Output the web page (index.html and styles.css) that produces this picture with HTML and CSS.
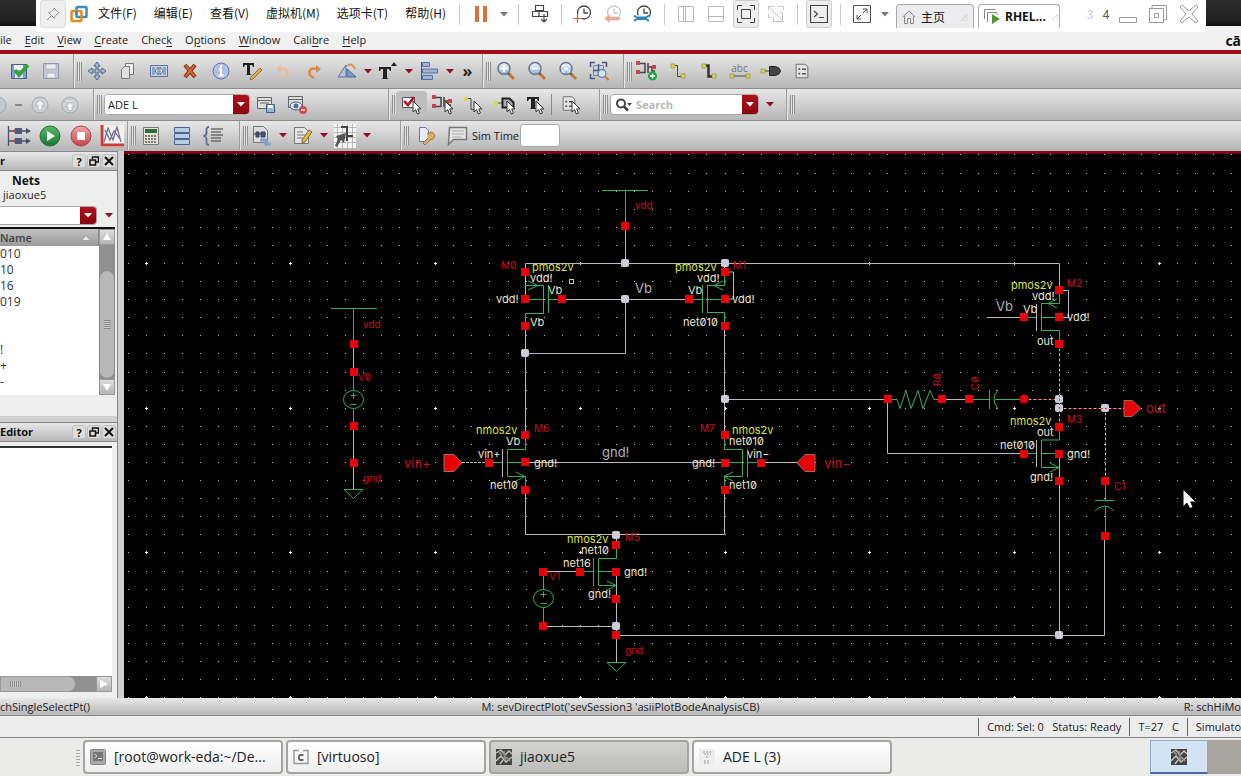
FILE: index.html
```html
<!DOCTYPE html>
<html lang="zh">
<head>
<meta charset="utf-8">
<title>Schematic Editor - jiaoxue5</title>
<link rel="stylesheet" href="styles.css">
</head>
<body>
<svg class="defs" width="0" height="0" aria-hidden="true">
  <defs>
    <linearGradient id="gGlass" x1="0" y1="0" x2="0" y2="1"><stop offset="0" stop-color="#f4f8fc"/><stop offset="1" stop-color="#8fb0d4"/></linearGradient>
    <linearGradient id="gGreen" x1="0" y1="0" x2="0" y2="1"><stop offset="0" stop-color="#58b868"/><stop offset="1" stop-color="#137a30"/></linearGradient>
    <linearGradient id="gRed" x1="0" y1="0" x2="0" y2="1"><stop offset="0" stop-color="#f0a8ac"/><stop offset="1" stop-color="#cc3d48"/></linearGradient>
    <symbol id="cur" viewBox="0 0 10 15"><path d="M1 1v11l2.600-2.400L5.400 14l2-1L5.700 8.900H9z" fill="#fff" stroke="#333" stroke-width="1"/></symbol>
    <symbol id="tri" viewBox="0 0 8 5"><path d="M0 0h8L4 4.500z"/></symbol>
    <symbol id="lens" viewBox="0 0 20 20"><path d="M12 12l6 6" stroke="#c07838" stroke-width="3"/><path d="M11.500 11.500l2 2" stroke="#555" stroke-width="2"/><circle cx="8" cy="7.500" r="6" fill="url(#gGlass)" stroke="#66788e" stroke-width="1.500"/></symbol>
    <symbol id="mos" viewBox="0 0 20 14"><path d="M4 2.500h5v9H4M12 2v10M12 6h7M16 6v4h3" fill="none" stroke="#444" stroke-width="1.500"/><path d="M0 0h4v4H0zM0 9h4v4H0zM16 4h4v4h-4z" fill="#c84450"/></symbol>
    <symbol id="page" viewBox="0 0 20 20"><path d="M3.500 2.500h10l3 3v12h-13z" fill="#e4e4e4" stroke="#666"/><path d="M6 7h2v2H6zM6 12h2v2H6z" fill="#555"/><path d="M10 8h4.500M10 13h4.500" stroke="#555" stroke-width="1.500"/></symbol>
    <symbol id="photo" viewBox="0 0 16 16"><rect width="16" height="16" fill="#44443f"/><path d="M0 4l5-3 4 5 4-4 3 3M0 12l5-5 5 6 6-5M4 15l3-4" fill="none" stroke="#c8c8c4" stroke-width="1.300"/><path d="M3 3l3 3M10 8l4 4M8 2l1 9" stroke="#8c8c88" stroke-width="2"/></symbol>
    <symbol id="clock" viewBox="0 0 20 20"><circle cx="11" cy="8.500" r="6.500" fill="none" stroke="currentColor" stroke-width="1.300"/><path d="M11 4.500v4.500h4" fill="none" stroke="currentColor" stroke-width="1.300"/></symbol>
  </defs>
</svg>

<header class="vmbar">
  <div class="cap"></div>
  <div class="vm">
    <button class="pinbtn" aria-label="Pin"><svg width="14" height="14" viewBox="0 0 14 14"><path d="M8 1l5 5-1.500.6L9 9.500l-.5 2L2.500 5.500l2-.5L7.500 2.500zM5 9l-4 4" fill="none" stroke="#999"/></svg></button>
    <svg class="logo" width="18" height="18" viewBox="0 0 18 18"><rect x="6.500" y="2" width="10" height="10" rx="1" fill="none" stroke="#3b8fb5" stroke-width="2.500"/><rect x="1.500" y="6" width="10" height="10" rx="1" fill="none" stroke="#e08a28" stroke-width="2.500"/><path d="M6.500 6v4" stroke="#3b8fb5" stroke-width="2.500"/></svg>
    <nav class="vmmenu"><button>文件(F)</button><button>编辑(E)</button><button>查看(V)</button><button>虚拟机(M)</button><button>选项卡(T)</button><button>帮助(H)</button></nav>
    <i class="sep"></i>
    <button class="vb" aria-label="Pause"><svg width="14" height="18"><path d="M1 1h4v16H1zM9 1h4v16H9z" fill="#d8723a"/></svg></button>
    <button class="vc" aria-label="Power menu"><svg width="8" height="5" fill="#777"><use href="#tri"/></svg></button>
    <i class="sep"></i>
    <button class="vb" aria-label="Send keys"><svg width="18" height="18" viewBox="0 0 18 18"><path d="M4.500.5h8v5h-8zM1.500 6.500h15v5h-15zM8 6.500v5M13 9v8M10 14l3 3 3-3" fill="none" stroke="#444" stroke-width="1.200"/></svg></button>
    <i class="sep"></i>
    <button class="vb" aria-label="Take snapshot"><svg width="20" height="20" color="#444"><use href="#clock"/><path d="M1 14h8M5 10v8" stroke="#fff" stroke-width="4"/><path d="M0 14.500h9M4.500 10v9" stroke="#d86040" stroke-width="1.200"/></svg></button>
    <button class="vb" aria-label="Revert snapshot"><svg width="20" height="20" color="#c8c8c8"><use href="#clock"/><path d="M1 14.500l6-5v3h10v4H7v3z" fill="#f0a898" stroke="#fff" stroke-width=".5"/></svg></button>
    <button class="vb" aria-label="Manage snapshots"><svg width="20" height="20" color="#444"><use href="#clock"/><path d="M3 14.500h13" stroke="#fff" stroke-width="6"/><path d="M1 11.500l3 2h9l3-2M1 17l3-2h9l3 2" fill="none" stroke="#2c86bc" stroke-width="2"/></svg></button>
    <i class="sep"></i>
    <button class="vb" aria-label="Library"><svg width="18" height="18"><path d="M1.500 1.500h15v15h-15zM6.500 1.500v15M8.500 1.500v15" fill="none" stroke="#b8b8b8"/></svg></button>
    <button class="vb" aria-label="Thumbnails"><svg width="18" height="18"><path d="M1.500 1.500h15v15h-15zM1.500 11.500h15" fill="none" stroke="#b8b8b8"/></svg></button>
    <button class="vb on" aria-label="Full screen"><svg width="18" height="18"><path d="M.500 5V.500H5M13 .500h4.500V5M17.500 13v4.500H13M5 17.500H.500V13M4.500 4.500h9v9h-9z" fill="none" stroke="#444"/></svg></button>
    <button class="vb" aria-label="Unity"><svg width="18" height="18"><path d="M1.500 5V1.500H7M1.500 9v3.500H4M6.500 12v4.500h9v-9H13M16.500 5V1.500h-5M1 1l16 16" fill="none" stroke="#c4c4c4"/></svg></button>
    <i class="sep"></i>
    <button class="vb on" aria-label="Console"><svg width="18" height="18"><path d="M.500.500h17v17H.500zM4 6l3.500 3L4 12M9 12.500h5" fill="none" stroke="#444" stroke-width="1.200"/></svg></button>
    <i class="sep"></i>
    <button class="vb" aria-label="Stretch"><svg width="18" height="18"><path d="M.500.500h17v17H.500zM10 4h4v4M14 4l-4 4M4 10v4h4M4 14l4-4" fill="none" stroke="#555"/></svg></button>
    <button class="vc" aria-label="Stretch menu"><svg width="8" height="5" fill="#777"><use href="#tri"/></svg></button>
    <div class="tabs">
      <a class="tab home" href="#home"><svg width="14" height="14"><path d="M.700 7L7 1l6.300 6M2.500 6v7.500h3V8.500h3v5h3V6" fill="none" stroke="#888"/></svg>主页<span class="close">⊿</span></a>
      <a class="tab live" href="#rhel"><svg width="16" height="16"><path d="M.500 10V.500H11M3.500 13V3.500H13V6" fill="none" stroke="#888"/><path d="M8 5l8 5-8 5z" fill="#4a9a30"/></svg><b>RHEL...</b><span class="close">⊿</span></a>
    </div>
    <span class="num dim">3</span><span class="num">4</span>
    <div class="win">
      <button aria-label="Minimize"><svg width="18" height="18"><path d="M.500 12.500h17v5H.500z" fill="none" stroke="#999"/></svg></button>
      <button aria-label="Restore"><svg width="18" height="18"><path d="M.500 3.500h14v14H.500zM3 3V.500h14.500V15H15M5.500 8.500h4v4h-4z" fill="none" stroke="#999"/></svg></button>
      <button aria-label="Close"><svg width="20" height="20"><path d="M1 3l2-2 7 6 7-6 2 2-6 7 6 7-2 2-7-6-7 6-2-2 6-7z" fill="none" stroke="#999"/></svg></button>
    </div>
  </div>
  <div class="cap end"></div>
</header>

<nav class="menubar">
  <button>ile</button><button><u>E</u>dit</button><button><u>V</u>iew</button><button><u>C</u>reate</button><button>Chec<u>k</u></button><button>O<u>p</u>tions</button><button><u>W</u>indow</button><button>Cali<u>b</u>re</button><button><u>H</u>elp</button>
  <span class="brand">cā</span>
</nav>

<div class="bar">
  <div class="grp first">
    <button class="tb" aria-label="Check and Save"><svg width="20" height="20"><path d="M1.500 3.500h15v14h-15z" fill="#7f9dc8" stroke="#44608c"/><path d="M4 4h9v5H4z" fill="#eef2f8"/><path d="M5 13h8v4H5z" fill="#dde"/><path d="M5 9l4 5 9-10" fill="none" stroke="#2fa52f" stroke-width="3.500"/></svg></button>
    <button class="tb" aria-label="Save"><svg width="20" height="20"><path d="M2.500 2.500h15v15h-15z" fill="#c4c8d2" stroke="#9298a8"/><path d="M5 3h10v5H5zM6 12h8v5H6z" fill="#eee" stroke="#a0a4b0" stroke-width=".6"/></svg></button>
  </div>
  <div class="grp">
    <i class="grip"></i>
    <button class="tb" aria-label="Move"><svg width="20" height="20"><path d="M10 1l3 4h-2v4h4V7l4 3-4 3v-2h-4v4h2l-3 4-3-4h2v-4H5v2l-4-3 4-3v2h4V5H7z" fill="#a8c0dc" stroke="#4c6888"/></svg></button>
    <button class="tb" aria-label="Copy"><svg width="20" height="20"><path d="M7.500 2.500h8v11h-8z" fill="#eee" stroke="#777"/><path d="M6.500 5.500l-3 3v9h8v-12z" fill="#e0e0e0" stroke="#777"/></svg></button>
    <button class="tb" aria-label="Stretch"><svg width="20" height="20"><path d="M1.500 4.500h17v11h-17z" fill="#c4d4ec" stroke="#5a759c"/><path d="M3 6h3v8H3zM14 6h3v8h-3z" fill="#8aa4cc"/><path d="M9 6v8l-3-4zM11 6v8l3-4z" fill="#fff" stroke="#456" stroke-width=".8"/></svg></button>
    <button class="tb" aria-label="Delete"><svg width="20" height="20"><path d="M5 4l10 12M15 4L5 16" stroke="#7a2a10" stroke-width="4"/><path d="M5.500 4.500l9 11M14.500 4.500l-9 11" stroke="#d46a2c" stroke-width="2"/></svg></button>
    <button class="tb" aria-label="Property"><svg width="20" height="20"><circle cx="10" cy="10" r="8" fill="#b4bee4" stroke="#6674b0"/><path d="M10 4v3M8 8.500h2V14M7.500 14.500h5" stroke="#fff" stroke-width="2" fill="none"/></svg></button>
    <button class="tb" aria-label="Edit label"><svg width="20" height="20"><path d="M1 2h11v4h-1L10 4H8v9l2 1H4l1-1V4H3L2 6H1z" fill="#222"/><path d="M18 7l2 2-9 9-3 1 1-3z" fill="#e0ae48" stroke="#80602c" stroke-width=".8"/></svg></button>
    <button class="tb" aria-label="Undo"><svg width="20" height="20"><path d="M10 17c7-3 6-11-3-9" fill="none" stroke="#e8bc94" stroke-width="2.500"/><path d="M8 4v8L3 8z" fill="#e8bc94"/></svg></button>
    <button class="tb" aria-label="Redo"><svg width="20" height="20"><path d="M10 17C3 14 4 6 13 8" fill="none" stroke="#d98a48" stroke-width="2.500"/><path d="M12 4v8l5-4z" fill="#d98a48"/></svg></button>
    <button class="mb spaced" aria-label="Rotate"><svg width="20" height="20"><path d="M1 16L9 4v12z" fill="#b4c4de" stroke="#5a7094"/><path d="M10 8v8h9z" fill="#7f9ccc" stroke="#44608c"/><path d="M10 5q5-4 8 3" fill="none" stroke="#d99858" stroke-width="2"/></svg><svg class="dn" width="8" height="5"><use href="#tri"/></svg></button>
    <button class="mb" aria-label="Text size"><svg width="20" height="20"><path d="M1 6h12v4h-1l-1-2H9v9l2 1H4l1-1V8H3l-1 2H1z" fill="#222"/><path d="M13 5l3-4 3 4z" fill="#222"/></svg><svg class="dn" width="8" height="5"><use href="#tri"/></svg></button>
    <button class="mb" aria-label="Align"><svg width="20" height="20"><path d="M2.500 1v18" stroke="#555"/><path d="M3.500 1.500h7v4h-7zM3.500 8h15v4h-15zM3.500 14.500h10v4h-10z" fill="#9fb4d8" stroke="#54709c"/></svg><svg class="dn" width="8" height="5"><use href="#tri"/></svg></button>
    <button class="more">»</button>
  </div>
  <div class="grp">
    <i class="grip"></i>
    <button class="tb" aria-label="Zoom in"><svg width="20" height="20"><use href="#lens"/><path d="M8 4v7M4.500 7.500h7" stroke="#fff" stroke-width="2"/></svg></button>
    <button class="tb" aria-label="Zoom out"><svg width="20" height="20"><use href="#lens"/><path d="M4.500 7.500h7" stroke="#fff" stroke-width="2"/></svg></button>
    <button class="tb" aria-label="Zoom fit"><svg width="20" height="20"><use href="#lens"/><path d="M4.500 5.500v-1h2M9.500 4.500h2v2M11.500 9v2h-2M6.500 11h-2V9M7 7h2v2H7z" fill="none" stroke="#fff" stroke-width="1.200"/></svg></button>
    <button class="tb" aria-label="Zoom to selected"><svg width="20" height="20"><path d="M1.500 6V1.500H6M13 1.500h4.500V6M1.500 13v4.500H6" fill="none" stroke="#485c78" stroke-width="1.500"/><path d="M4.500 4.500h10v10h-10z" fill="#c4d0e0" stroke="#7488a4"/><path d="M9.500 3v12M4 9.500h12" stroke="#485c78" stroke-width="1.500"/><circle cx="13" cy="12.500" r="4" fill="#d4e4f4" stroke="#58708c"/><path d="M16 15.500l3.500 3.500" stroke="#c07838" stroke-width="2"/></svg></button>
  </div>
  <div class="grp">
    <i class="grip"></i>
    <button class="tb" aria-label="Create instance"><svg width="22" height="20"><use href="#mos" width="20" height="14"/><circle cx="16.500" cy="15" r="4.500" fill="#1fa040"/><path d="M16.500 12.500v5M14 15h5" stroke="#fff" stroke-width="1.500"/></svg></button>
    <button class="tb" aria-label="Wire narrow"><svg width="20" height="20"><path d="M5 4.500h4.500v11H14" fill="none" stroke="#444"/><path d="M3 3h4v4H3zM13 13h4v4h-4z" fill="#d8d84c" stroke="#88882c" stroke-width=".6"/></svg></button>
    <button class="tb" aria-label="Wire wide"><svg width="20" height="20"><path d="M5 4.500h4.500v11H14" fill="none" stroke="#333" stroke-width="2.500"/><path d="M3 3h4v4H3zM13 13h4v4h-4z" fill="#d8d84c" stroke="#88882c" stroke-width=".6"/></svg></button>
    <button class="tb abc" aria-label="Wire name"><span>abc</span><svg width="22" height="6"><path d="M2 3h18" stroke="#444"/><path d="M1 1h4v4H1zM17 1h4v4h-4z" fill="#d8d84c" stroke="#88882c" stroke-width=".6"/></svg></button>
    <button class="tb" aria-label="Create pin"><svg width="22" height="20"><path d="M4 10h5" stroke="#444"/><path d="M9.500 5.500h6q4.500 1 5 4.500-.5 3.500-5 4.500h-6z" fill="#444" stroke="#222"/><path d="M1 8h4v4H1z" fill="#d8d84c" stroke="#88882c" stroke-width=".6"/></svg></button>
    <button class="tb" aria-label="Create form"><svg width="18" height="18"><use href="#page"/></svg></button>
  </div>
</div>

<div class="bar">
  <div class="grp nav2">
    <svg class="half" width="8" height="20"><circle cx="-2" cy="10" r="8" fill="#c4c8d0" stroke="#a4a8b2"/></svg>
    <span class="dash"></span>
    <button class="tb" aria-label="Up"><svg width="18" height="18"><circle cx="9" cy="9" r="8" fill="#cdd1d8" stroke="#a4a8b2"/><path d="M9 4l5 5h-3v5H7V9H4z" fill="#f4f4f6" stroke="#aaa" stroke-width=".6"/></svg></button>
    <button class="tb" aria-label="Top"><svg width="18" height="18"><circle cx="9" cy="9" r="8" fill="#cdd1d8" stroke="#a4a8b2"/><path d="M4 4h10v2H4zM9 6.500l5 4h-3v4H7v-4H4z" fill="#f4f4f6" stroke="#aaa" stroke-width=".6"/></svg></button>
  </div>
  <div class="grp ws">
    <i class="grip"></i>
    <div class="combo"><select aria-label="Workspace"><option>ADE L</option></select><span class="red"><svg width="8" height="5"><use href="#tri"/></svg></span></div>
    <button class="tb" aria-label="Save workspace"><svg width="20" height="18"><path d="M1.500 1.500h14v11h-14zM1.500 4.500h14M4 7h9" fill="#dcdcdc" stroke="#666"/><path d="M10.500 8.500h8v8h-8z" fill="#9fb4d8" stroke="#445c88"/><path d="M12 9h5v3h-5z" fill="#fff"/></svg></button>
    <button class="tb" aria-label="Delete workspace"><svg width="20" height="20"><path d="M1.500 1.500h14v11h-14zM1.500 4.500h14" fill="#dcdcdc" stroke="#666"/><ellipse cx="9" cy="11" rx="6" ry="4" fill="#e8eef4" stroke="#456"/><circle cx="9" cy="11" r="2.500" fill="#4a6ea0"/><circle cx="16" cy="15" r="4" fill="#d04858"/><path d="M14 15h4" stroke="#fff" stroke-width="1.500"/></svg></button>
  </div>
  <div class="grp sel">
    <i class="grip"></i>
    <button class="tb on" aria-label="Select all"><svg width="22" height="22"><path d="M1.500 3.500h12v10h-12z" fill="#fff" stroke="#555"/><path d="M3 7l4 4 6-8" fill="none" stroke="#b81420" stroke-width="2.500"/><use href="#cur" x="11" y="6" width="10" height="15"/></svg></button>
    <button class="tb" aria-label="Select instance"><svg width="22" height="22"><use href="#mos" y="1" width="20" height="14"/><use href="#cur" x="12" y="6" width="10" height="15"/></svg></button>
    <button class="tb" aria-label="Select wire"><svg width="22" height="22"><path d="M3 4.500h5v11h3" fill="none" stroke="#444"/><path d="M1 3h4v4H1z" fill="#d8d84c"/><use href="#cur" x="10" y="6" width="10" height="15"/></svg></button>
    <button class="tb" aria-label="Select pin"><svg width="22" height="22"><path d="M3 9h5" stroke="#444"/><path d="M8.500 4.500h7l4 4v5h-11z" fill="#aaa" stroke="#222" stroke-width="2"/><path d="M0 7h4v4H0z" fill="#d8d84c"/><use href="#cur" x="12" y="6" width="10" height="15"/></svg></button>
    <button class="tb" aria-label="Select text"><svg width="20" height="22"><path d="M1 3h12v4h-1l-1-2H9v9l2 1H4l1-1V5H3L2 7H1z" fill="#222"/><use href="#cur" x="9" y="6" width="10" height="15"/></svg></button>
    <i class="bar-sep"></i>
    <button class="tb" aria-label="Select filter"><svg width="22" height="22"><use href="#page" width="18" height="19"/><use href="#cur" x="11" y="6" width="10" height="15"/></svg></button>
  </div>
  <div class="grp find">
    <i class="grip"></i>
    <div class="combo search"><svg width="18" height="14"><circle cx="6" cy="5.500" r="4" fill="none" stroke="#444" stroke-width="2"/><path d="M9 8.500l4 4" stroke="#444" stroke-width="2.500"/><path d="M12 5h5l-2.500 3z" fill="#444"/></svg><input type="search" placeholder="Search" aria-label="Search"><span class="red"><svg width="8" height="5"><use href="#tri"/></svg></span></div>
    <button class="vc" aria-label="Search options"><svg class="dn" width="8" height="5"><use href="#tri"/></svg></button>
  </div>
  <div class="grp"><i class="grip"></i></div>
</div>

<div class="bar last">
  <div class="grp sim">
    <button class="tb" aria-label="Netlist"><svg width="24" height="22"><path d="M1.500 1v20M2 6h20M2 16h20" stroke="#456" stroke-width="1.300"/><path d="M8 3h7v6H8zM8 13h7v6H8z" fill="#4c5c80"/><path d="M8 4l-3 2 3 2zM8 14l-3 2 3 2z" fill="#b04858"/><path d="M19 3l5 3-5 3zM19 13l5 3-5 3z" fill="#456"/></svg></button>
    <button class="tb" aria-label="Run"><svg width="22" height="22"><circle cx="11" cy="11" r="10" fill="url(#gGreen)" stroke="#2b6b3c"/><path d="M8 6l8 5-8 5z" fill="#fff"/></svg></button>
    <button class="tb" aria-label="Stop"><svg width="22" height="22"><circle cx="11" cy="11" r="10" fill="url(#gRed)" stroke="#b04450"/><path d="M7 7h8v8H7z" fill="#fff"/></svg></button>
    <button class="tb" aria-label="Plot"><svg width="24" height="22"><path d="M0 0h24v22H0z" fill="#f4f0f0"/><path d="M2 0v20h22" fill="none" stroke="#cc3c3c" stroke-width="3"/><path d="M4 17L8 3l5 12 4-13 4 15M5 5l5 10 4-9 6 8" fill="none" stroke="#6c6c94" stroke-width="1.200"/></svg></button>
  </div>
  <div class="grp calc">
    <i class="grip"></i>
    <button class="tb" aria-label="Calculator"><svg width="18" height="20"><path d="M1.500 1.500h15v17h-15z" fill="#e8e4d4" stroke="#777"/><path d="M3 3h12v4H3z" fill="#2d6c44"/><path d="M3 10h12M3 13h12M3 16h12" stroke="#777" stroke-width="2" stroke-dasharray="2 1"/></svg></button>
    <button class="tb" aria-label="Browser"><svg width="18" height="20"><path d="M1.500 1.500h15v5h-15zM1.500 7.500h15v5h-15zM1.500 13.500h15v5h-15z" fill="#b8cce8" stroke="#4a6690"/></svg></button>
    <button class="tb" aria-label="Expressions"><svg width="20" height="20"><path d="M6 1Q3 1 3.500 5T1 10q3 1 2.500 5T6 19" fill="none" stroke="#5c6f90" stroke-width="1.800"/><path d="M8 3h12M8 6h10M8 9h12M8 12h10M8 15h10" stroke="#6c6c6c" stroke-width="1.500"/></svg></button>
  </div>
  <div class="grp chk">
    <i class="grip"></i>
    <button class="mb" aria-label="Schematic"><svg width="20" height="22"><path d="M1.500 1.500h10l4 4v12h-14z" fill="#ddd" stroke="#777"/><path d="M1 9h13M4 7h3v5H4zM9 7h4v5H9z" fill="#4c5c80" stroke="#345"/><path d="M8 15h6v4h5" fill="none" stroke="#86a0c8" stroke-width="3"/></svg><svg class="dn" width="8" height="5"><use href="#tri"/></svg></button>
    <button class="mb" aria-label="Annotate"><svg width="20" height="20"><path d="M1.500 1.500h10l4 4v12h-14zM4 6h6M4 9h8M4 12h6" fill="#e4e4e4" stroke="#777"/><path d="M16 4l3 2-7 10-3 1V14z" fill="#e0bc3c" stroke="#654" stroke-width=".8"/></svg><svg class="dn" width="8" height="5"><use href="#tri"/></svg></button>
    <button class="mb" aria-label="Probe"><svg width="22" height="24"><path d="M0 0h22v24H0z" fill="#f4f4f4"/><path d="M3.500 0v24M8.500 0v24M13.500 0v24M18.500 0v24M0 3.500h22M0 8.500h22M0 13.500h22M0 18.500h22" stroke="#aaa" stroke-width=".8"/><path d="M7 3h6v14M13 12h6" fill="none" stroke="#444" stroke-width="2"/><path d="M2 12l10-3-2 10-3-3-4 7-2-1 3-7z" fill="#555"/></svg><svg class="dn" width="8" height="5"><use href="#tri"/></svg></button>
  </div>
  <div class="grp time">
    <i class="grip"></i>
    <button class="tb" aria-label="Options"><svg width="20" height="20"><path d="M3.500 1.500h6l3 3v11h-9z" fill="#e8ecf4" stroke="#6878a0"/><path d="M11 8l5-2 3 3-2 4-3 1-5 5-2-2 5-5" fill="#dcac68" stroke="#a07840"/></svg></button>
    <button class="tb" aria-label="Message"><svg width="22" height="20"><path d="M3.500 1.500h17v12h-13l-5 5z" fill="#e4e4e4" stroke="#777" stroke-width="1.500"/><path d="M6 5h12M6 8h12M6 11h9" stroke="#aaa"/></svg></button>
    <label for="simtime">Sim Time</label><input id="simtime" type="text">
  </div>
</div>

<main class="work">
  <aside class="dock">
    <section class="panel">
      <div class="ptitle"><b>r</b><span class="pbtns"><button>?</button><button aria-label="Float"><svg width="10" height="10"><path d="M3.500 3V1h6v5H7M1 4h5.500v5H1z" fill="none" stroke="#111" stroke-width="1.500"/></svg></button><button aria-label="Close"><svg width="10" height="10"><path d="M1 1l8 8M9 1L1 9" stroke="#111" stroke-width="2"/></svg></button></span></div>
      <div class="nethead"><b>Nets</b><span>jiaoxue5</span></div>
      <div class="netpick"><div class="combo"><select aria-label="Net filter"><option></option></select><span class="red"><svg width="8" height="5"><use href="#tri"/></svg></span></div><svg class="dn" width="8" height="5"><use href="#tri"/></svg></div>
      <div class="listwrap">
        <table class="list"><thead><tr><th><div>Name<svg width="8" height="6"><path d="M0 5.500L4 .500l4 5z" fill="#eee" stroke="#888" stroke-width=".6"/></svg></div></th></tr></thead>
        <tbody><tr><td>010</td></tr><tr><td>10</td></tr><tr><td>16</td></tr><tr><td>019</td></tr><tr><td></td></tr><tr><td></td></tr><tr><td>!</td></tr><tr><td>+</td></tr><tr><td>-</td></tr></tbody></table>
        <div class="vs"><button aria-label="Scroll up"><svg width="8" height="8"><path d="M0 7L4 0l4 7z" fill="#fff"/></svg></button><i class="thumb"><s></s></i><button aria-label="Scroll down"><svg width="8" height="8"><path d="M0 1L4 8l4-7z" fill="#fff"/></svg></button></div>
      </div>
    </section>
    <section class="panel grow">
      <div class="ptitle"><b>Editor</b><span class="pbtns"><button>?</button><button aria-label="Float"><svg width="10" height="10"><path d="M3.500 3V1h6v5H7M1 4h5.500v5H1z" fill="none" stroke="#111" stroke-width="1.500"/></svg></button><button aria-label="Close"><svg width="10" height="10"><path d="M1 1l8 8M9 1L1 9" stroke="#111" stroke-width="2"/></svg></button></span></div>
      <div class="props"></div>
      <div class="hs"><i class="thumb"><s></s></i><button aria-label="Scroll right"><svg width="8" height="8"><path d="M0 0l8 4-8 4z" fill="#fff"/></svg></button></div>
    </section>
  </aside>
  <div class="canvas">
    <svg width="100%" height="100%" aria-label="Schematic">
      <defs>
        <rect id="p" x="-4" y="-4" width="8" height="8" fill="#e60008"/>
        <rect id="j" x="-4" y="-4" width="8" height="8" rx="2" fill="#ccccd6"/>
        <g id="src"><ellipse rx="10" ry="9"/><path d="M-3-4h6M0-7v6M-3 5h6M0-27V-9M0 9V27"/></g>
      </defs>
      <g transform="translate(-124 -152)">
        <path id="dots" fill="#c0c0c0"/><path id="majors" fill="#fff"/>
        <g class="wire">
          <path d="M625.500 226v37M525.500 272v-8.500h534V290M525.500 272v27M562 299.500h127M625.500 299v54.500h-100M525.500 326v109M724.500 263v9h9v27h-8M724.500 326v109M724.500 399.500H888M887.500 399v54.500H1024M942 399.500h27M987 317.500h37M1059.500 290.500h9v27h-9M1059.500 453v182M616.500 635.500h488V536M525.500 490v44.500h199V490M525 462.500h200M761 462.500h36M543.500 571.500H580M543.500 626.500h73M616.500 535v10M616.500 572v90M353.500 344v27M353.500 426v63"/>
          <path d="M502.500 449v28M1036.500 304v27M1036.500 440v27"/>
          <path d="M462 462.500h27" stroke-dasharray="3 1"/>
        </g>
        <g class="sel-wire"><path class="under" d="M1059.500 344v83M1024 399.500h36M1059 408.500h63M1105.500 408v73"/><path class="dashes" d="M1059.500 344v83M1024 399.500h36M1059 408.500h63M1105.500 408v73"/></g>
        <g class="dev">
          <path d="M602 190.500h46M625.500 190v36M331 308.500h46M353.500 308v36"/>
          <path d="M525 285.500h19M543.500 285v28M548.500 285v28M525 299.500h19M548 299.500h14M544 313.500h-18.500V326M528 281l10 4.500-10 4.500"/>
          <path d="M724.500 272v13.500h-17M707.500 285v28M702.500 285v28M689 299.500h13M707 299.500h18M707 312.500h17.500V326M723 281l-9 4.500 9 4.500"/>
          <path d="M1059.500 290v13.500h-18V331M1041 317.500h18M1041 330.500h18.500V344M1024 317.500h12M1057 299l-9 4.500 9 4.500"/>
          <path d="M1059.500 427v13h-18v27.500h18M1041 453.500h18M1024 453.500h12M1050 463l9 4.500-9 4.500"/>
          <path d="M525.500 435v14.500h-18v27h18V490M507 462.500h18M489 462.500h13M516 472l9 4.500-9 4.500"/>
          <path d="M724.500 435v14.500h18v27h-18V490M742 462.500h-18M747.500 449v28M748 462.500h13M733 472l-9 4.500 9 4.500"/>
          <path d="M616.500 545v13.500h-18v27h18M598 571.500h18M593.500 558v28M580 571.500h13M607 581l9 4.500-9 4.500"/>
          <path d="M888 399.500h9l3 9 6-18 5 18 7-18 5 18 7-18 4 9h8M969 399.500h20M989.500 390v19M998 390q-8 9 0 19M995 399.500h29"/>
          <path d="M1105.500 481v19M1095 500.500h19M1095 511q10-10 19 0M1105.500 506v30"/>
          <path d="M607 662.500h19l-9.500 9zM344 489.500h19l-9.500 9z"/>
          <use href="#src" x="353.500" y="399.500"/><use href="#src" x="543.500" y="598.500"/>
        </g>
        <g class="ioport"><path d="M444 454.500h10l8 8.500-8 8.500h-10zM797 463l8-8.500h10v17h-10zM1124 400.500h8l9 8-9 8h-8z"/></g>
        <use href="#p" x="625" y="226"/><use href="#p" x="525" y="272"/><use href="#p" x="525" y="299"/><use href="#p" x="562" y="299"/><use href="#p" x="525" y="326"/>
        <use href="#p" x="725" y="272"/><use href="#p" x="725" y="299"/><use href="#p" x="689" y="299"/><use href="#p" x="725" y="326"/>
        <use href="#p" x="1059" y="290"/><use href="#p" x="1059" y="317"/><use href="#p" x="1024" y="317"/><use href="#p" x="1059" y="344"/>
        <use href="#p" x="1059" y="427"/><use href="#p" x="1059" y="454"/><use href="#p" x="1024" y="454"/><use href="#p" x="1059" y="481"/>
        <use href="#p" x="888" y="399"/><use href="#p" x="942" y="399"/><use href="#p" x="969" y="399"/><circle cx="1024" cy="399" r="4.500" fill="#e60008"/>
        <use href="#p" x="1105" y="481"/><use href="#p" x="1105" y="536"/>
        <use href="#p" x="525" y="435"/><use href="#p" x="525" y="462"/><use href="#p" x="489" y="463"/><use href="#p" x="525" y="490"/>
        <use href="#p" x="725" y="435"/><use href="#p" x="725" y="463"/><use href="#p" x="761" y="463"/><use href="#p" x="725" y="490"/>
        <use href="#p" x="616" y="545"/><use href="#p" x="616" y="572"/><use href="#p" x="580" y="572"/><use href="#p" x="616" y="599"/><use href="#p" x="616" y="635"/>
        <use href="#p" x="543" y="572"/><use href="#p" x="543" y="626"/>
        <use href="#p" x="354" y="344"/><use href="#p" x="354" y="372"/><use href="#p" x="354" y="426"/><use href="#p" x="354" y="463"/>
        <use href="#j" x="625" y="263"/><use href="#j" x="725" y="263"/><use href="#j" x="625" y="299"/><use href="#j" x="525" y="353"/><use href="#j" x="725" y="399"/><use href="#j" x="1059" y="399"/><use href="#j" x="1059" y="408"/><use href="#j" x="1105" y="408"/><use href="#j" x="1059" y="635"/><use href="#j" x="616" y="535"/><use href="#j" x="616" y="626"/>
        <path d="M1059.500 395v17M1101 408.500h8" stroke="#b04050" stroke-dasharray="2 2"/>
        <rect x="569.500" y="279.500" width="4" height="4" fill="none" stroke="#d8d860"/>
        <g class="cell"><text x="532" y="271">pmos2v</text><text x="675" y="271">pmos2v</text><text x="1011" y="289">pmos2v</text><text x="1010" y="425">nmos2v</text><text x="476" y="434">nmos2v</text><text x="732" y="434">nmos2v</text><text x="567" y="543">nmos2v</text></g>
        <g class="term"><text x="530" y="282">vdd!</text><text x="548" y="294">Vb</text><text x="496" y="303">vdd!</text><text x="530" y="326">Vb</text><text x="697" y="282">vdd!</text><text x="688" y="294">Vb</text><text x="732" y="303">vdd!</text><text x="683" y="326">net010</text><text x="1032" y="300">vdd!</text><text x="1023" y="313">Vb</text><text x="1067" y="321">vdd!</text><text x="1037" y="345">out</text><text x="1037" y="436">out</text><text x="1000" y="449">net010</text><text x="1067" y="458">gnd!</text><text x="1030" y="481">gnd!</text><text x="506" y="445">Vb</text><text x="478" y="458">vin+</text><text x="534" y="467">gnd!</text><text x="490" y="489">net10</text><text x="729" y="445">net010</text><text x="747" y="458">vin−</text><text x="692" y="467">gnd!</text><text x="729" y="489">net10</text><text x="581" y="554">net10</text><text x="563" y="567">net16</text><text x="624" y="576">gnd!</text><text x="588" y="598">gnd!</text></g>
        <g class="net"><text x="635" y="293">Vb</text><text x="996" y="311">Vb</text><text x="602" y="457">gnd!</text></g>
        <g class="inst"><text x="501" y="269">M0</text><text x="733" y="269">M1</text><text x="1067" y="287">M2</text><text x="1067" y="423">M3</text><text x="534" y="432">M6</text><text x="700" y="432">M7</text><text x="625" y="541">M5</text><text x="549" y="580">V1</text><text x="358" y="381">V0</text><text x="1114" y="490">C1</text><text x="635" y="209">vdd</text><text x="363" y="328">vdd</text><text x="363" y="482">gnd</text><text x="625" y="654">gnd</text><text transform="translate(941 386) rotate(-90)">R0</text><text transform="translate(979 390) rotate(-90)">C0</text></g>
        <g class="port"><text x="404" y="468">vin+</text><text x="824" y="468">vin−</text><text x="1146" y="413">out</text></g>
        <path d="M1183.500 490v16l3.500-3.500 3 5.500 2.500-1-2.500-5.500h5z" fill="#fff"/>
      </g>
    </svg>
  </div>
</main>

<div class="status1"><span>chSingleSelectPt()</span><span>M: sevDirectPlot('sevSession3 'asiiPlotBodeAnalysisCB)</span><span>R: schHiMo</span></div>
<div class="status2"><span>Cmd: Sel: 0 &nbsp; Status: Ready</span><span>T=27 &nbsp; C</span><span>Simulato</span></div>
<footer class="task">
  <i class="handle"></i>
  <button><svg width="16" height="16"><rect x=".5" y=".5" width="15" height="15" rx="1" fill="#aaa" stroke="#888"/><rect x="3" y="3" width="10" height="9" fill="#777"/><path d="M4.500 5l2.500 2-2.500 2M8 9.500h4" fill="none" stroke="#ddd"/></svg>[root@work-eda:~/De...</button>
  <button><svg width="16" height="16"><path d="M4 1.500H1v13h14v-13h-3M5 .500v2M11 .500v2" fill="none" stroke="#999" stroke-width="1.500"/><path d="M10.500 6H7.500q-1.500 0-1.500 2v1q0 2 1.500 2h3" fill="none" stroke="#666" stroke-width="2"/></svg>[virtuoso]</button>
  <button class="active"><svg width="16" height="16"><use href="#photo"/></svg>jiaoxue5</button>
  <button><svg width="16" height="16"><path d="M0 0h16v16H0z" fill="#eee"/><path d="M4 3h8M5 5h7M7 8h2M5 12h6M5 14h6" stroke="#999" stroke-dasharray="2 1"/></svg>ADE L (3)</button>
  <div class="pager"><button aria-label="Workspace 1"><svg width="16" height="16"><use href="#photo"/></svg></button><button aria-label="Workspace 2"></button></div>
</footer>
<script src="grid.js"></script>
</body>
</html>
```
FILE: grid.js
```js
// Snap grid: a dot every tenth of a unit, a bright cross every eighth dot.
const PITCH = 18.09;
const ORIGIN_X = 145.7;
const ORIGIN_Y = 263;
let minor = "";
let major = "";
for (let i = -1; i < 140; i++) {
  for (let k = -6; k < 90; k++) {
    const x = Math.round(ORIGIN_X + i * PITCH);
    const y = Math.round(ORIGIN_Y + k * PITCH);
    if (i % 8 === 0 && k % 8 === 0) {
      major += `M${x - 1} ${y}h3v1h-3zM${x} ${y - 1}h1v3h-1z`;
    } else {
      minor += `M${x} ${y}h1v1h-1z`;
    }
  }
}
document.getElementById("dots").setAttribute("d", minor);
document.getElementById("majors").setAttribute("d", major);
```
FILE: styles.css
```css
* { box-sizing: border-box; }
body { margin: 0; height: 100vh; display: flex; flex-direction: column; overflow: hidden; background: #ececec; color: #222; font: 11px/16px "Open Sans", "Noto Sans", "Noto Sans CJK SC", sans-serif; }
button { border: 0; padding: 0; margin: 0; background: none; font: inherit; color: inherit; }
svg { flex: none; display: block; }
.defs { position: absolute; }
input, select { font: inherit; color: inherit; border: 0; padding: 0; margin: 0; min-width: 0; background: #fff; appearance: none; outline: 0; }

.vmbar { display: flex; flex: none; height: 32px; background: #f0f0f0; }
.cap { width: 36px; height: 26px; background: linear-gradient(#2c2c2c, #222 20px, #0c0c0c); }
.cap.end { flex: 1; }
.vm { display: flex; align-items: center; background: #fff; padding: 0 7px 4px 4px; font-family: "Noto Sans CJK SC", sans-serif; font-size: 12px; color: #111; }
.pinbtn { width: 26px; height: 28px; display: grid; place-items: center; background: #eee; border: 1px solid #ddd; border-radius: 3px; }
.logo { margin: 0 10px 0 4px; }
.vmmenu { display: flex; gap: 17px; margin-right: 7px; padding-bottom: 2px; white-space: nowrap; }
.sep { width: 1px; height: 21px; margin: 0 6px; background: #ccc; }
.vb { width: 30px; height: 28px; display: grid; place-items: center; }
.vb.on { width: 26px; margin: 0 2px; background: #eee; border: 1px solid #ccc; border-radius: 3px; }
.vc { width: 16px; height: 20px; display: grid; place-items: center; }
.tabs { display: flex; gap: 4px; align-self: flex-end; margin-left: 3px; }
.tab { display: flex; align-items: center; gap: 5px; height: 24px; padding: 0 5px; color: #111; text-decoration: none; border: 1px solid #aaa; border-bottom: 0; border-radius: 4px 4px 0 0; background: #ececee; }
.tab.home { width: 78px; }
.tab.live { width: 82px; background: #fff; font-family: "Open Sans", sans-serif; }
.close { margin-left: auto; font-size: 8px; color: #ccc; }
.num { width: 16px; text-align: center; color: #555; }
.num.dim { margin-left: 22px; color: #ccc; }
.win { display: flex; gap: 12px; margin-left: 5px; }

.menubar { display: flex; flex: none; gap: 13px; height: 22px; padding-bottom: 2px; background: #f1f1f1; border-bottom: 4px solid #a50a18; white-space: nowrap; }
.menubar u { text-underline-offset: 2px; }
.brand { margin-left: auto; font: bold 14px/18px "Noto Sans", sans-serif; color: #111; }

.bar { display: flex; flex: none; height: 32px; background: linear-gradient(#e8e8e8, #cfcfcf 50%, #b6b6b6); border-bottom: 1px solid #8c8c8c; }
.menubar + .bar { height: 35px; }
.bar.last { height: 30px; border-bottom: 1px solid #b8b8b8; }
.grp { display: flex; align-items: center; padding: 0 9px 0 3px; border-right: 1px solid #9c9c9c; box-shadow: 1px 0 #e6e6e6; }
.grp:last-child { border: 0; box-shadow: none; }
.grp.first { padding: 0 7px 0 4px; }
.grip { width: 5px; height: 19px; flex: none; background: repeating-linear-gradient(90deg, #909090 0 1px, #e4e4e4 1px 2px); }
.tb { width: 31px; height: 27px; display: grid; place-items: center; }
.grip + .tb { margin-left: -1px; }
.tb.on { background: #bebebe; border-radius: 4px; }
.tb.abc { place-content: center; }
.abc span { font-size: 10px; line-height: 9px; color: #777; }
.mb { width: 41px; display: flex; align-items: center; gap: 7px; padding-left: 2px; }
.mb.spaced { width: 47px; padding-left: 8px; }
.dn { fill: #8c1020; }
.more { width: 15px; padding-left: 4px; font-size: 16px; font-weight: bold; line-height: 20px; }
.nav2 { padding: 0 8px 0 0; }
.dash { width: 7px; height: 2px; margin: 0 3px 0 7px; background: #888; }
.nav2 .tb { margin-left: -1px; }
.ws { padding-right: 76px; }
.combo { display: flex; align-items: center; height: 21px; background: #fff; border: 1px solid #a8a8a8; border-radius: 4px; overflow: hidden; }
.ws .combo { width: 146px; margin: 0 0 0 2px; }
.combo select, .combo input { flex: 1; width: 0; height: 19px; padding-left: 3px; }
.combo input::placeholder { color: #b8b8b8; font-weight: bold; opacity: 1; }
.red { width: 16px; height: 100%; display: grid; place-items: center; background: linear-gradient(#b0101c, #8a0410); fill: #fff; }
.sel { padding-right: 13px; }
.bar-sep { width: 1px; height: 21px; background: #888; margin-right: 3px; }
.search { width: 149px; margin-left: 2px; padding-left: 4px; }
.find { padding-right: 5px; }
.find .vc { width: 22px; }
.sim { padding: 0 0 0 3px; }
.calc { padding-right: 11px; }
.chk { padding-right: 27px; }
.chk .grip { margin-right: 2px; }
.time .grip { margin-right: 2px; }
.time input { width: 40px; height: 23px; margin-left: 1px; border: 1px solid #aaa; border-radius: 3px; }

.work { display: flex; flex: 1; min-height: 0; }
.dock { width: 118px; flex: none; display: flex; flex-direction: column; gap: 6px; background: #d0d0d0; border-right: 1px solid #888; }
.panel { background: #eee; display: flex; flex-direction: column; }
.panel:first-child { height: 265px; }
.grow { flex: 1; padding-bottom: 6px; }
.ptitle { display: flex; flex: none; align-items: center; justify-content: space-between; height: 20px; background: linear-gradient(#e8e8e8, #b8b8b8); border: solid #888; border-width: 1px 0; color: #111; }
.pbtns { display: flex; gap: 1px; padding-right: 1px; }
.pbtns button { width: 14px; height: 14px; display: grid; place-items: center; line-height: 14px; font-weight: bold; border-radius: 3px; background: #ddd; border: 1px solid #c0c0c0; }
.nethead { display: flex; flex-direction: column; padding: 3px 0 3px 3px; line-height: 14px; }
.nethead b { padding-left: 9px; font-size: 12px; color: #111; }
.netpick { display: flex; align-items: center; gap: 8px; height: 21px; margin-bottom: 1px; }
.netpick .combo { width: 97px; height: 19px; border-left: 0; border-radius: 0 4px 4px 0; }
.listwrap { display: flex; height: 168px; border-top: 2px solid #111; margin-right: 2px; background: #fff; }
.list { flex: 1; border-collapse: collapse; align-self: flex-start; }
.list th { height: 17px; padding: 0 8px 0 0; background: linear-gradient(#c4c4c4, #999); color: #444; text-align: left; border-right: 1px solid #888; }
.list th div { display: flex; align-items: center; justify-content: space-between; line-height: 16px; font-weight: 600; }
.list td { height: 16px; padding: 0; line-height: 16px; color: #333; font-size: 12px; }
.vs { width: 16px; display: flex; flex-direction: column; background: #909090; }
.vs button, .hs button { width: 16px; height: 16px; display: grid; place-items: center; background: linear-gradient(#ddd, #b4b4b4); border: 1px solid #999; }
.vs .thumb { flex: 1; margin-top: 25px; border-radius: 8px; border: 1px solid #888; background: #b8b8b8; display: grid; place-items: center; }
.vs s { width: 7px; height: 9px; background: repeating-linear-gradient(#888 0 1px, #ccc 1px 2px); }
.props { flex: 1; margin: 4px 5px 0 0; border-top: 2px solid #333; background: #fff; }
.hs { display: flex; height: 16px; margin-right: 5px; background: #909090; }
.hs .thumb { width: 76px; margin-right: auto; border-radius: 0 8px 8px 0; border: 1px solid #999; background: #b8b8b8; display: grid; place-items: center; padding-right: 46px; }
.hs s { width: 11px; height: 6px; background: repeating-linear-gradient(90deg, #888 0 1px, #ccc 1px 2px); }

.canvas { flex: 1; min-width: 0; position: relative; margin-left: 6px; background: #000; border-top: 3px solid #7c0814; overflow: hidden; box-shadow: -6px 0 #cfcfd4; }
.canvas > svg { position: absolute; inset: -2px 0 0 0; height: calc(100% + 2px); }
.canvas text { font-family: Inter, sans-serif; font-size: 11px; font-feature-settings: "zero"; }
.wire { fill: none; stroke: #b8b8c2; }
.sel-wire { fill: none; }
.under { stroke: #8c1020; }
.dashes { stroke: #f0b8b8; stroke-dasharray: 2 3; }
.dev { fill: none; stroke: #34b060; }
.ioport { fill: #e60008; stroke: #a07050; }
.cell { fill: #dce440; }
.term { fill: #ece4d0; }
.net { fill: #b4b4bc; }
.canvas .net text, .canvas .port text { font-size: 13px; }
.inst, .port { fill: #c8101c; }
.canvas .inst text { font-size: 10px; }

.status1 { display: grid; grid-template-columns: 1fr auto 1fr; flex: none; height: 18px; line-height: 17px; background: linear-gradient(#e8e8e8, #b8b8b8); border-bottom: 1px solid #888; white-space: nowrap; }
.status1 span:last-child { text-align: right; }
.status2 { display: flex; justify-content: flex-end; flex: none; height: 22px; padding: 2px 0 1px; border-bottom: 1px solid #888; line-height: 18px; white-space: nowrap; }
.status2 span { border-left: 1px solid #666; padding: 0 8px; }
.status2 span:last-child { padding-right: 0; }
.task { display: flex; flex: none; align-items: center; gap: 3px; height: 38px; padding-left: 76px; background: #ebebea; }
.handle { width: 4px; height: 17px; background: radial-gradient(circle, #aaa 1px, transparent 1px) 0 0 / 2px 3px; }
.task > button { flex: 0 1 200px; height: 34px; display: flex; align-items: center; gap: 8px; padding: 0 5px; font-size: 14px; line-height: 20px; color: #222; background: linear-gradient(#fff, #eee); border: 2px solid #a4a4a0; border-radius: 4px; white-space: nowrap; }
.task > button.active { background: linear-gradient(#d2d2d0, #bcbcba); }
.pager { display: flex; margin-left: auto; height: 34px; }
.pager button { width: 58px; display: grid; place-items: center; background: #d3e2f4; border: 1px solid #98a8c0; border-bottom: 2px solid #4868a0; }
.pager button + button { width: 33px; background: #a8a59f; border: 0; }
```
